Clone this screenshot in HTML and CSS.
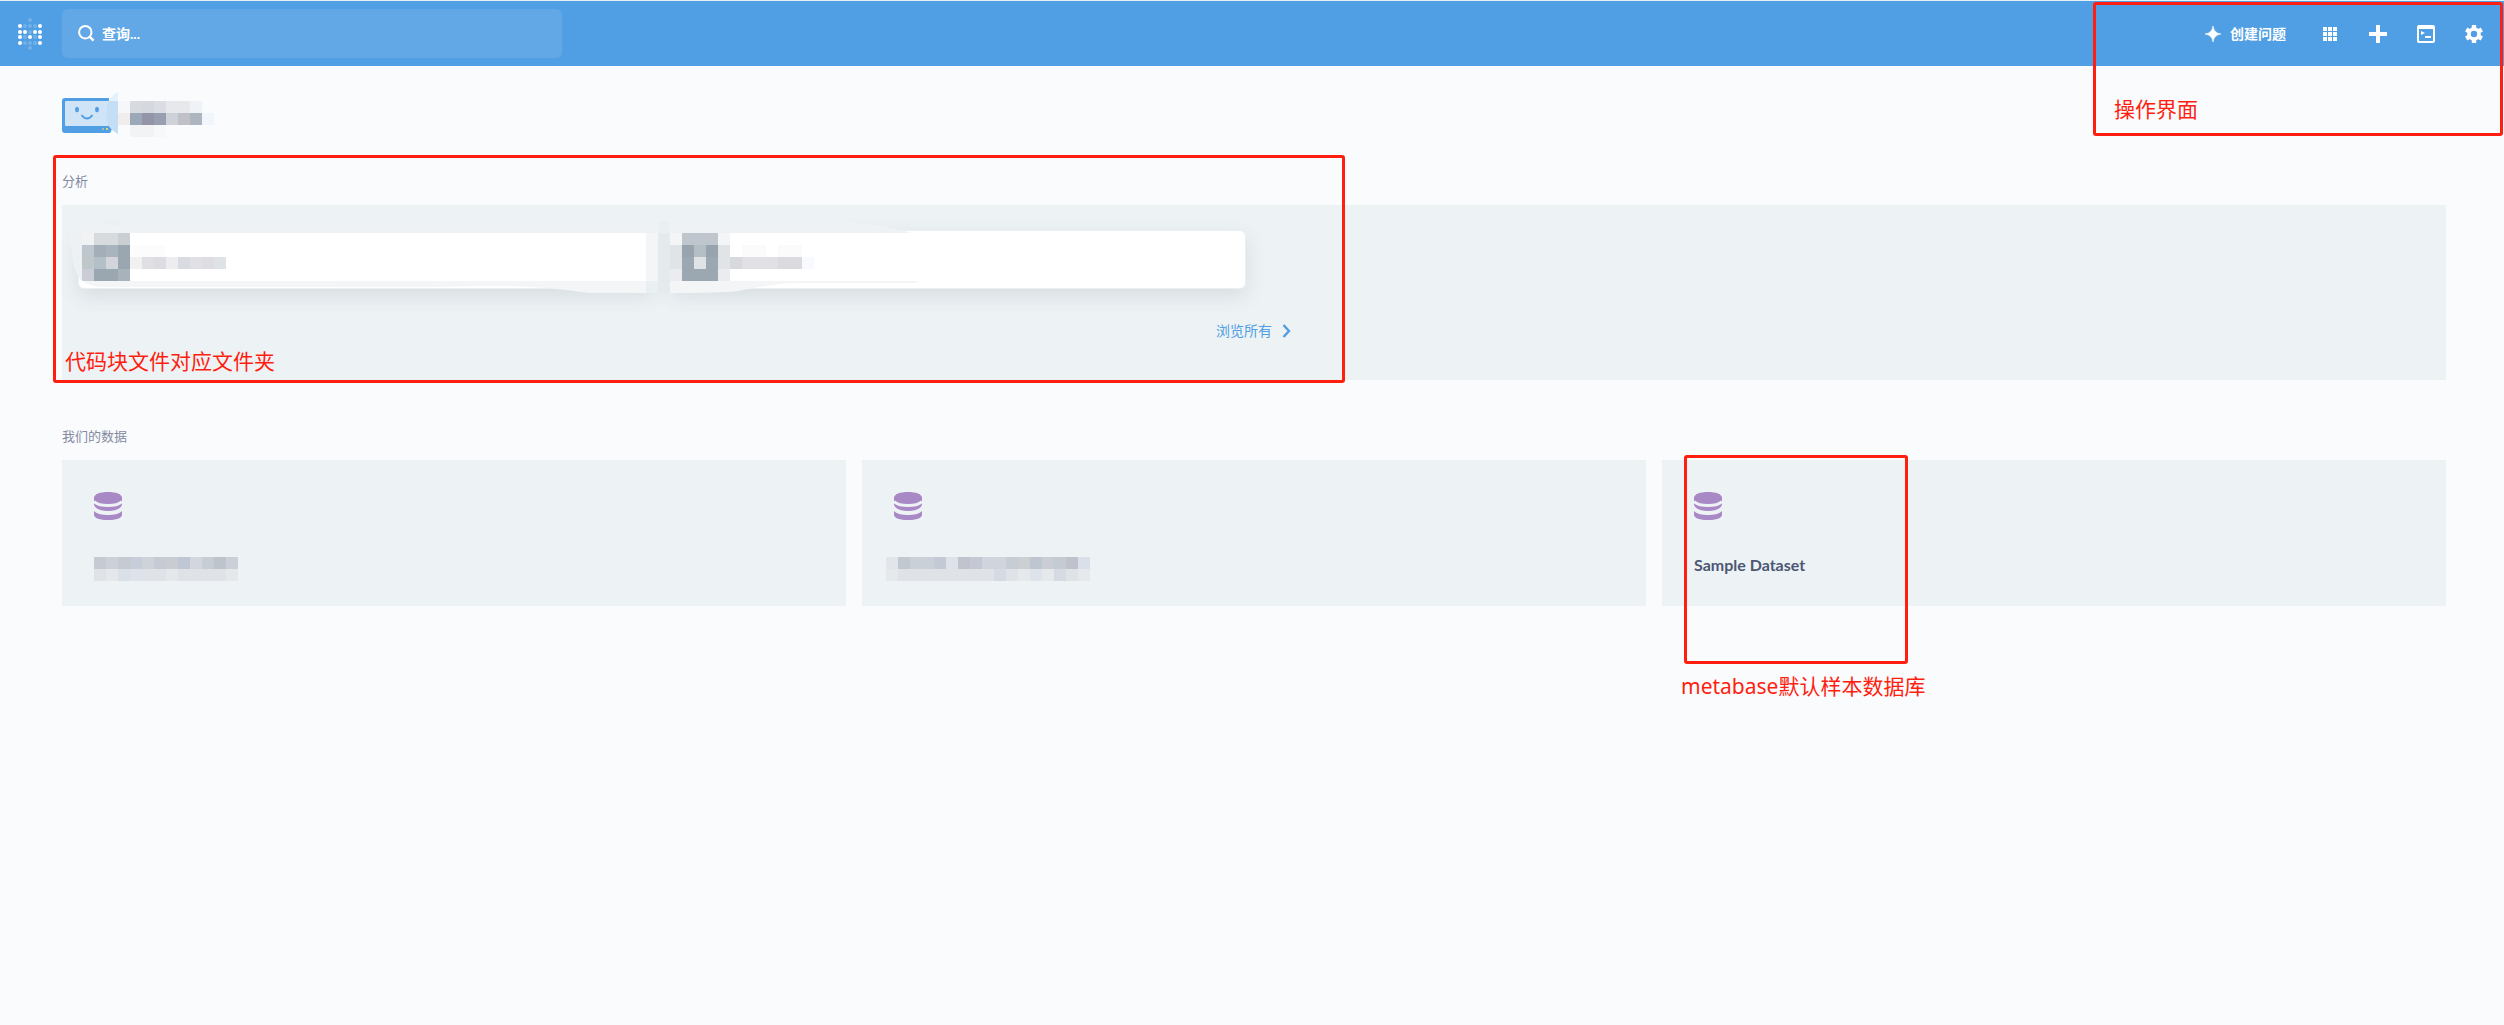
FILE: index.html
```html
<!DOCTYPE html>
<html lang="zh-CN">

<head>
    <meta charset="UTF-8">
    <meta name="viewport" content="width=device-width, initial-scale=1.0">
    <title>Metabase</title>
    <link rel="stylesheet" href="styles.css">
</head>

<body>
    <header class="navbar">
        <a href="#" class="logo" aria-label="Metabase">
            <svg width="24" height="32" viewBox="0 0 24 32">
                <g fill="#fff" opacity="0.2">
                    <circle cx="12" cy="2" r="2"/>
                    <circle cx="7" cy="8" r="2"/><circle cx="12" cy="8" r="2"/><circle cx="17" cy="8" r="2"/>
                    <circle cx="12" cy="14" r="2"/>
                    <circle cx="7" cy="19" r="2"/><circle cx="17" cy="19" r="2"/>
                    <circle cx="7" cy="25" r="2"/><circle cx="12" cy="25" r="2"/><circle cx="17" cy="25" r="2"/>
                    <circle cx="12" cy="30" r="2"/>
                </g>
                <g fill="#fff">
                    <circle cx="2" cy="8" r="2"/><circle cx="22" cy="8" r="2"/>
                    <circle cx="2" cy="14" r="2"/><circle cx="7" cy="14" r="2"/><circle cx="17" cy="14" r="2"/><circle cx="22" cy="14" r="2"/>
                    <circle cx="2" cy="19" r="2"/><circle cx="12" cy="19" r="2"/><circle cx="22" cy="19" r="2"/>
                    <circle cx="2" cy="25" r="2"/><circle cx="22" cy="25" r="2"/>
                </g>
            </svg>
        </a>
        <label class="search" for="search">
            <svg width="17" height="17" viewBox="0 0 17 17" fill="none" stroke="#fff" stroke-width="2">
                <circle cx="7.3" cy="7.2" r="6.2"/>
                <path d="M11.6 11.6l4 4" stroke-width="2.4"/>
            </svg>
            <input type="text" id="search" placeholder="查询..." aria-label="查询">
        </label>
        <nav class="actions">
            <a href="#" class="ask">
                <svg width="16" height="16" viewBox="0 0 16 16" fill="#fff">
                    <path d="M8 0Q8.9 7.1 16 8Q8.9 8.9 8 16Q7.1 8.9 0 8Q7.1 7.1 8 0z" stroke="#fff" stroke-width="0.6"/>
                </svg>
                创建问题
            </a>
            <a href="#" class="icon" aria-label="浏览数据">
                <svg width="18" height="18" viewBox="0 0 18 18" fill="#fff">
                    <path d="M2 2h4v4H2zM7 2h4v4H7zM12 2h4v4h-4zM2 7h4v4H2zM7 7h4v4H7zM12 7h4v4h-4zM2 12h4v4H2zM7 12h4v4H7zM12 12h4v4h-4z"/>
                </svg>
            </a>
            <button type="button" class="icon" aria-label="新建">
                <svg width="18" height="18" viewBox="0 0 18 18" fill="#fff">
                    <path d="M7 0h4v7h7v4h-7v7H7v-7H0V7h7z"/>
                </svg>
            </button>
            <a href="#" class="icon" aria-label="SQL">
                <svg width="18" height="18" viewBox="0 0 18 18">
                    <path fill="#fff" fill-rule="evenodd" d="M2 0h14a2 2 0 0 1 2 2v14a2 2 0 0 1-2 2H2a2 2 0 0 1-2-2V2a2 2 0 0 1 2-2zM2 4v12h14V4z"/>
                    <path fill="#fff" d="M4 6l4 2-4 2zM8 11h6v2H8z"/>
                </svg>
            </a>
            <button type="button" class="icon" aria-label="设置">
                <svg width="18" height="18" viewBox="0 0 18 18" fill="none" stroke="#fff">
                    <circle cx="9" cy="9" r="5" stroke-width="3.6"/>
                    <path d="M9 0v3M9 15v3M1.2 4.5l2.6 1.5M14.2 12l2.6 1.5M1.2 13.5l2.6-1.5M14.2 6l2.6-1.5" stroke-width="4.4"/>
                </svg>
            </button>
        </nav>
    </header>

    <main>
        <div class="greeting">
            <svg width="152" height="47" viewBox="0 0 152 47">
                <!-- 机器人 -->
                <path fill="#509ee3" d="M3 0h38v35H3a3 3 0 0 1-3-3V3a3 3 0 0 1 3-3z"/>
                <path fill="#509ee3" d="M40 0h7v35h-7z"/>
                <rect x="3" y="3" width="44" height="25" rx="1" fill="#d0e4f8"/>
                <ellipse cx="15" cy="11.500" rx="2" ry="2.700" fill="#509ee3"/>
                <ellipse cx="35" cy="11.500" rx="2" ry="2.700" fill="#509ee3"/>
                <path d="M19.500 17Q25 24 30.500 17" fill="none" stroke="#509ee3" stroke-width="2"/>
                <path fill="#a5bda0" d="M40 30h2v2h-2z"/>
                <path fill="#e0d57c" d="M44 30h2v2h-2z"/>
                <path fill="#509ee3" d="M46 28h3q2 3-1 7h-2z"/>
                <path fill="#e5f1fb" d="M56-6v42Q44 28 44 14T56-6z"/>
                <path fill="#c4def5" d="M46 3h10v24H46q-4-12 0-24z"/>
                <path fill="#c4def5" d="M46 27h10v9q-7-4-10-9z"/>
                <!-- 用户名 -->
                <path fill="#f6f7fa" d="M56 3h12v12H56z"/>
                <path fill="#d7dadf" d="M68 3h12v12H68z"/>
                <path fill="#d6d8e0" d="M80 3h12v12H80z"/>
                <path fill="#dadde6" d="M92 3h12v12H92z"/>
                <path fill="#e7e8ec" d="M104 3h24v12h-24z"/>
                <path fill="#eff3f7" d="M128 3h12v12h-12z"/>
                <path fill="#f1edec" d="M56 15h12v12H56z"/>
                <path fill="#9ba8ba" d="M68 15h12v12H68z"/>
                <path fill="#9394a5" d="M80 15h12v12H80z"/>
                <path fill="#989fb0" d="M92 15h12v12H92z"/>
                <path fill="#cfd1d9" d="M104 15h12v12h-12z"/>
                <path fill="#c0c1c8" d="M116 15h12v12h-12z"/>
                <path fill="#adb5be" d="M128 15h12v12h-12z"/>
                <path fill="#f0f6fc" d="M140 15h12v12h-12z"/>
                <path fill="#f2f3f5" d="M68 27h24v12H68z"/>
                <path fill="#f7f8fa" d="M92 27h12v12H92z"/>
            </svg>
        </div>

        <section class="analysis">
            <h2>分析</h2>
            <div class="panel">
                <div class="collections">
                    <a href="#" class="collection" aria-label="文件夹"></a>
                    <a href="#" class="collection" aria-label="文件夹"></a>
                    <svg class="mosaic" width="1168" height="59" viewBox="78 230 1168 59">
                        <path fill="#eff2f5" d="M70 245V233l12-12q18-2 34 5l10-5H840q40 3 72 12H125v12z"/>
                        <path fill="#eef1f3" d="M71 233h12v48q-12-6-12-48z"/>
                        <path fill="#f4f5f7" d="M82 281H920l-5 2H800q-25 0-62 8-20 2-60 2H590q-60-8-110-7-60 2-150 1H110q-20 1-28-7z"/>
                        <path fill="#f4f5f7" d="M646 233h12v48h-12zM670 233h12v12h-12zM718 233h12v12h-12z"/>
                        <path fill="#eaeff2" d="M658 221h12v12h-12zM646 281h12v12h-12z"/>
                        <path fill="#e5eaec" d="M658 233h12v60h-12z"/>
                        <!-- 左 -->
                        <path fill="#f1f2f3" d="M82 233h12v12H82z"/>
                        <path fill="#d8dbde" d="M94 233h24v12H94z"/>
                        <path fill="#cacfd3" d="M118 233h12v12h-12z"/>
                        <path fill="#bec6ce" d="M82 245h12v12H82z"/>
                        <path fill="#a4aeb8" d="M94 245h12v12H94z"/>
                        <path fill="#a9b4be" d="M106 245h12v12h-12z"/>
                        <path fill="#9aa7b1" d="M118 245h12v24h-12z"/>
                        <path fill="#bfc7ca" d="M82 257h12v12H82z"/>
                        <path fill="#b3c0c7" d="M94 257h12v12H94z"/>
                        <path fill="#d2d6db" d="M106 257h12v12h-12z"/>
                        <path fill="#cacdd6" d="M82 269h12v12H82z"/>
                        <path fill="#9ba7b0" d="M94 269h24v12H94z"/>
                        <path fill="#a7b2ba" d="M118 269h12v12h-12z"/>
                        <path fill="#fcfcfc" d="M130 245h36v12h-36z"/>
                        <path fill="#f1f1f2" d="M130 257h12v12h-12z"/>
                        <path fill="#dfdfe4" d="M142 257h12v12h-12z"/>
                        <path fill="#dcdce3" d="M154 257h12v12h-12z"/>
                        <path fill="#ededf0" d="M166 257h12v12h-12z"/>
                        <path fill="#d8dbe2" d="M178 257h12v12h-12z"/>
                        <path fill="#e0e0e6" d="M190 257h12v12h-12z"/>
                        <path fill="#dddde2" d="M202 257h12v12h-12z"/>
                        <path fill="#dfe2e7" d="M214 257h12v12h-12z"/>
                        <!-- 右 -->
                        <path fill="#c0c6ce" d="M682 233h36v12h-36z"/>
                        <path fill="#e0e4e7" d="M670 245h12v24h-12zM718 245h12v24h-12z"/>
                        <path fill="#97a4ae" d="M682 245h12v12h-12zM706 245h12v12h-12z"/>
                        <path fill="#b3bfc5" d="M694 245h12v12h-12z"/>
                        <path fill="#9ba8b2" d="M682 257h12v12h-12zM706 257h12v12h-12zM682 269h36v12h-36z"/>
                        <path fill="#e0e3e6" d="M694 257h12v12h-12z"/>
                        <path fill="#ebecef" d="M670 269h12v12h-12zM718 269h12v12h-12z"/>
                        <path fill="#fbfbfb" d="M742 245h24v12h-24zM778 245h24v12h-24z"/>
                        <path fill="#d8d8df" d="M730 257h12v12h-12z"/>
                        <path fill="#e0e0e5" d="M742 257h36v12h-36z"/>
                        <path fill="#dadadf" d="M778 257h24v12h-24z"/>
                        <path fill="#f8faff" d="M802 257h12v12h-12z"/>
                    </svg>
                </div>
                <a href="#" class="browse">
                    浏览所有
                    <svg width="9" height="14" viewBox="0 0 9 14" fill="none" stroke="#509ee3" stroke-width="2.4">
                        <path d="M1.500 1l5.500 6-5.500 6"/>
                    </svg>
                </a>
            </div>
            <div class="mark mark-folder"></div>
            <p class="note note-folder">代码块文件对应文件夹</p>
        </section>

        <section class="data">
            <h2>我们的数据</h2>
            <div class="databases">
                <a href="#" class="database" aria-label="数据库">
                    <svg class="db-icon" width="28" height="28" viewBox="0 0 28 28">
                        <path d="M0 6C0 2 6 0 14 0s14 2 14 6v6c0 4-6 7-14 7S0 16 0 12z"/>
                        <path d="M0 19c3 3 8 4 14 4s11-1 14-4v4c0 3-6 5-14 5S0 26 0 23z"/>
                        <path class="db-gap" d="M0 9.500c3 3 8 4 14 4s11-1 14-4"/>
                    </svg>
                    <span class="db-name">
                        <svg width="144" height="24" viewBox="0 0 144 24">
                            <path fill="#c6cad2" d="M0 0h12v12H0z"/><path fill="#cdd0d6" d="M12 0h12v12H12z"/>
                            <path fill="#c6cad3" d="M24 0h12v12H24z"/><path fill="#c8cdda" d="M36 0h12v12H36z"/>
                            <path fill="#ced2d9" d="M48 0h12v12H48z"/><path fill="#c7cad5" d="M60 0h12v12H60z"/>
                            <path fill="#c9ccd0" d="M72 0h12v12H72z"/><path fill="#c0c7d4" d="M84 0h12v12H84z"/>
                            <path fill="#d3d6df" d="M96 0h12v12H96z"/><path fill="#c6cdd6" d="M108 0h12v12h-12z"/>
                            <path fill="#bec4cc" d="M120 0h12v12h-12z"/><path fill="#cbd0d8" d="M132 0h12v12h-12z"/>
                            <path fill="#dfe3e7" d="M0 12h144v12H0z"/><path fill="#e4e8ea" d="M12 12h12v12H12zM72 12h12v12H72zM132 12h12v12h-12z"/>
                            <path fill="#dae0e7" d="M24 12h12v12H24z"/><path fill="#dee3eb" d="M36 12h12v12H36z"/>
                        </svg>
                    </span>
                </a>
                <a href="#" class="database" aria-label="数据库">
                    <svg class="db-icon" width="28" height="28" viewBox="0 0 28 28">
                        <path d="M0 6C0 2 6 0 14 0s14 2 14 6v6c0 4-6 7-14 7S0 16 0 12z"/>
                        <path d="M0 19c3 3 8 4 14 4s11-1 14-4v4c0 3-6 5-14 5S0 26 0 23z"/>
                        <path class="db-gap" d="M0 9.500c3 3 8 4 14 4s11-1 14-4"/>
                    </svg>
                    <span class="db-name">
                        <svg width="196" height="24" viewBox="8 0 196 24">
                            <path fill="#e2e5e9" d="M0 0h12v12H0z"/><path fill="#c1c8d0" d="M12 0h12v12H12z"/>
                            <path fill="#cad0d8" d="M24 0h24v12H24z"/><path fill="#c4cad5" d="M48 0h12v12H48z"/>
                            <path fill="#dee2e9" d="M60 0h12v12H60z"/><path fill="#c2c4cd" d="M72 0h12v12H72z"/>
                            <path fill="#c4c8d4" d="M84 0h12v12H84z"/><path fill="#d0d4dc" d="M96 0h24v12H96z"/>
                            <path fill="#c6cdd4" d="M120 0h12v12h-12z"/><path fill="#cdd0d3" d="M132 0h12v12h-12z"/>
                            <path fill="#bdc6d1" d="M144 0h12v12h-12z"/><path fill="#cacdd6" d="M156 0h12v12h-12z"/>
                            <path fill="#c5cbd3" d="M168 0h12v12h-12z"/><path fill="#bfc2cb" d="M180 0h12v12h-12z"/>
                            <path fill="#dae0e9" d="M192 0h12v12h-12z"/>
                            <path fill="#dfe3e7" d="M0 12h204v12H0z"/><path fill="#e5e9ec" d="M0 12h12v12H0zM132 12h12v12h-12zM156 12h12v12h-12zM192 12h12v12h-12z"/>
                            <path fill="#d6dae3" d="M108 12h12v12h-12zM168 12h12v12h-12z"/><path fill="#dde2eb" d="M144 12h12v12h-12z"/>
                        </svg>
                    </span>
                </a>
                <a href="#" class="database">
                    <svg class="db-icon" width="28" height="28" viewBox="0 0 28 28">
                        <path d="M0 6C0 2 6 0 14 0s14 2 14 6v6c0 4-6 7-14 7S0 16 0 12z"/>
                        <path d="M0 19c3 3 8 4 14 4s11-1 14-4v4c0 3-6 5-14 5S0 26 0 23z"/>
                        <path class="db-gap" d="M0 9.500c3 3 8 4 14 4s11-1 14-4"/>
                    </svg>
                    <span class="db-name">Sample Dataset</span>
                    <span class="mark mark-sample"></span>
                    <span class="note note-sample">metabase默认样本数据库</span>
                </a>
            </div>
        </section>
    </main>

    <div class="mark mark-actions"></div>
    <p class="note note-actions">操作界面</p>
</body>

</html>
```
FILE: styles.css
```css
* {
    box-sizing: border-box;
}

body {
    position: relative;
    margin: 0;
    min-height: 100vh;
    background-color: #fafbfd;
    font-family: Lato, "Noto Sans CJK SC", sans-serif;
    color: #4c5773;
}

a {
    text-decoration: none;
}

svg {
    display: block;
    flex-shrink: 0;
}

.navbar {
    display: flex;
    align-items: center;
    height: 66px;
    padding: 0 21px 0 18px;
    border-top: 1px solid #e9eef2;
    background-color: #509ee3;
}

.logo {
    margin-right: 20px;
}

.search {
    display: flex;
    align-items: center;
    gap: 7px;
    width: 500px;
    height: 49px;
    padding: 0 16px;
    border-radius: 6px;
    background-color: #62a8e6;
}

.search input {
    flex: 1;
    padding: 0;
    border: none;
    outline: none;
    background: transparent;
    font-family: inherit;
    font-size: 14px;
    font-weight: bold;
    color: #fff;
}

.search input::placeholder {
    color: #fff;
    opacity: 1;
}

.actions {
    display: flex;
    align-items: center;
    gap: 30px;
    margin-left: auto;
}

.ask {
    display: flex;
    align-items: center;
    gap: 9px;
    margin-right: 5px;
    font-size: 14px;
    line-height: 20px;
    font-weight: bold;
    color: #fff;
}

.icon {
    padding: 0;
    border: none;
    background: none;
    cursor: pointer;
}

main {
    padding: 32px 58px 32px 62px;
}

.greeting {
    height: 35px;
}

.greeting svg {
    overflow: visible;
}

section {
    position: relative;
}

h2 {
    margin: 0 0 14px;
    font-size: 13px;
    line-height: 20px;
    font-weight: normal;
    color: #848ba0;
}

.analysis {
    margin-top: 38px;
}

.data {
    margin-top: 46px;
}

.panel {
    padding: 25px 16px 39px;
    background-color: #edf2f5;
}

.collections {
    position: relative;
    display: grid;
    grid-template-columns: 1fr 1fr;
    gap: 16px;
    width: 1168px;
    max-width: 100%;
}

.collection {
    height: 59px;
    border: 1px solid #eaeff1;
    border-radius: 6px;
    background-color: #fff;
    box-shadow: 0 7px 20px rgba(60, 70, 70, 0.12);
}

.mosaic {
    position: absolute;
    top: 0;
    left: 0;
    overflow: visible;
}

.browse {
    display: flex;
    align-items: center;
    justify-content: flex-end;
    gap: 10px;
    width: 1213px;
    max-width: 100%;
    margin-top: 32px;
    font-size: 14px;
    line-height: 20px;
    color: #509ee3;
}

.databases {
    display: grid;
    grid-template-columns: repeat(3, 1fr);
    gap: 16px;
}

.database {
    position: relative;
    padding: 32px 32px 31px;
    background-color: #edf2f5;
    color: #4c5773;
}

.db-icon {
    fill: #a989c5;
}

.db-gap {
    fill: none;
    stroke: #edf2f5;
    stroke-width: 3;
}

.db-name {
    display: block;
    height: 20px;
    margin-top: 35px;
    font-size: 16px;
    line-height: 20px;
    font-weight: bold;
}

.db-name svg {
    position: relative;
    top: 2px;
    overflow: visible;
}

/* 标注 */
.mark {
    position: absolute;
    border: 3px solid #ff1e10;
    border-radius: 3px;
    pointer-events: none;
}

.note {
    position: absolute;
    margin: 0;
    font-family: "Noto Sans", "Noto Sans CJK SC", sans-serif;
    font-size: 21px;
    line-height: 30px;
    color: #ff1e10;
    white-space: nowrap;
}

.mark-actions {
    top: 2px;
    right: 1px;
    width: 410px;
    height: 134px;
}

.note-actions {
    top: 94px;
    right: 306px;
}

.mark-folder {
    top: -16px;
    left: -9px;
    width: 1292px;
    height: 228px;
}

.note-folder {
    top: 175px;
    left: 3px;
}

.mark-sample {
    top: -5px;
    left: 22px;
    width: 224px;
    height: 209px;
}

.note-sample {
    top: 211px;
    left: 19px;
}
```
